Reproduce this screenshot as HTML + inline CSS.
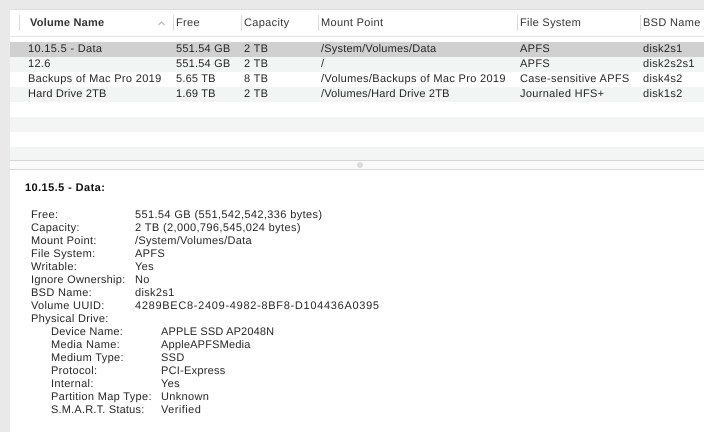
<!DOCTYPE html>
<html><head><meta charset="utf-8"><style>
html,body{margin:0;padding:0;width:704px;height:432px;overflow:hidden;background:#fff}
body{position:relative;font:11px/13px "Liberation Sans",sans-serif;letter-spacing:.33px;color:#262626;-webkit-font-smoothing:antialiased;text-rendering:geometricPrecision}
.r{position:absolute;left:10px;right:0;height:15px}
.t{position:absolute;white-space:nowrap}
.b{position:absolute;background:#dcdcdc;width:1px;top:15px;height:16px}
.h{top:17px;color:#333}
.n{letter-spacing:.2px}
</style></head><body>
<div style="position:absolute;left:0;top:0;width:704px;height:9px;background:#e9e9e9"></div>
<div style="position:absolute;left:0;top:0;width:10px;height:432px;background:#e9e9e9"></div>
<div style="position:absolute;left:10px;right:0;top:9px;height:1px;background:#dedede"></div>
<div style="position:absolute;left:10px;right:0;top:36px;height:1px;background:#e4e4e4"></div>
<div class="b" style="left:19px"></div><div class="b" style="left:173px"></div><div class="b" style="left:241px"></div><div class="b" style="left:318px"></div><div class="b" style="left:517px"></div><div class="b" style="left:640px"></div>
<div class="t h" style="left:30px;font-weight:bold;letter-spacing:.22px">Volume Name</div>
<svg style="position:absolute;left:157px;top:20px" width="10" height="7"><path d="M1.5 5L4.5 2L7.5 5" fill="none" stroke="#b0b0b0" stroke-width="1.1"/></svg>
<div class="t h" style="left:176px">Free</div><div class="t h" style="left:244px">Capacity</div><div class="t h" style="left:321px">Mount Point</div><div class="t h" style="left:520px">File System</div><div class="t h" style="left:643px">BSD Name</div>

<div class="r" style="top:42px;background:#d0d0d0"></div>
<div class="r" style="top:57px;background:#f3f5f4"></div>
<div class="r" style="top:87px;background:#f3f5f4"></div>
<div class="r" style="top:117px;background:#f3f5f4"></div>
<div class="r" style="top:147px;height:13px;background:#f3f5f4"></div>

<div class="t" style="left:28px;top:43px">10.15.5 - Data</div><div class="t n" style="left:176px;top:43px">551.54 GB</div><div class="t" style="left:244px;top:43px">2 TB</div><div class="t n" style="left:321px;top:43px">/System/Volumes/Data</div><div class="t" style="left:520px;top:43px">APFS</div><div class="t" style="left:643px;top:43px">disk2s1</div>
<div class="t" style="left:28px;top:58px">12.6</div><div class="t n" style="left:176px;top:58px">551.54 GB</div><div class="t" style="left:244px;top:58px">2 TB</div><div class="t" style="left:321px;top:58px">/</div><div class="t" style="left:520px;top:58px">APFS</div><div class="t" style="left:643px;top:58px">disk2s2s1</div>
<div class="t" style="left:28px;top:73px">Backups of Mac Pro 2019</div><div class="t n" style="left:176px;top:73px">5.65 TB</div><div class="t" style="left:244px;top:73px">8 TB</div><div class="t" style="left:321px;top:73px">/Volumes/Backups of Mac Pro 2019</div><div class="t" style="left:520px;top:73px">Case-sensitive APFS</div><div class="t" style="left:643px;top:73px">disk4s2</div>
<div class="t n" style="left:28px;top:88px">Hard Drive 2TB</div><div class="t n" style="left:176px;top:88px">1.69 TB</div><div class="t" style="left:244px;top:88px">2 TB</div><div class="t n" style="left:321px;top:88px">/Volumes/Hard Drive 2TB</div><div class="t" style="left:520px;top:88px">Journaled HFS+</div><div class="t" style="left:643px;top:88px">disk1s2</div>

<div style="position:absolute;left:10px;right:0;top:160px;height:1px;background:#d6d6d6"></div>
<div style="position:absolute;left:10px;right:0;top:161px;height:8px;background:#fafafa"></div>
<div style="position:absolute;left:10px;right:0;top:169px;height:1px;background:#d9d9d9"></div>
<div style="position:absolute;left:357px;top:162px;width:6px;height:6px;border-radius:50%;background:#dcdcdc"></div>

<div class="t" style="left:25px;top:182px;font-weight:bold;color:#111;letter-spacing:.42px">10.15.5 - Data:</div>

<div class="t" style="left:31px;top:209px">Free:</div><div class="t" style="left:135px;top:209px;letter-spacing:.38px">551.54 GB (551,542,542,336 bytes)</div>
<div class="t" style="left:31px;top:222px">Capacity:</div><div class="t" style="left:135px;top:222px;letter-spacing:.38px">2 TB (2,000,796,545,024 bytes)</div>
<div class="t" style="left:31px;top:235px">Mount Point:</div><div class="t n" style="left:135px;top:235px;letter-spacing:.28px">/System/Volumes/Data</div>
<div class="t" style="left:31px;top:248px">File System:</div><div class="t" style="left:135px;top:248px">APFS</div>
<div class="t" style="left:31px;top:261px">Writable:</div><div class="t" style="left:135px;top:261px">Yes</div>
<div class="t n" style="left:31px;top:274px;letter-spacing:.27px">Ignore Ownership:</div><div class="t" style="left:135px;top:274px">No</div>
<div class="t" style="left:31px;top:287px">BSD Name:</div><div class="t" style="left:135px;top:287px">disk2s1</div>
<div class="t" style="left:31px;top:300px">Volume UUID:</div><div class="t" style="left:135px;top:300px;letter-spacing:.7px">4289BEC8-2409-4982-8BF8-D104436A0395</div>
<div class="t" style="left:31px;top:313px">Physical Drive:</div>
<div class="t n" style="left:51px;top:326px;letter-spacing:.25px">Device Name:</div><div class="t" style="left:161px;top:326px;letter-spacing:.15px">APPLE SSD AP2048N</div>
<div class="t" style="left:51px;top:339px">Media Name:</div><div class="t n" style="left:161px;top:339px">AppleAPFSMedia</div>
<div class="t" style="left:51px;top:352px">Medium Type:</div><div class="t" style="left:161px;top:352px">SSD</div>
<div class="t" style="left:51px;top:365px">Protocol:</div><div class="t n" style="left:161px;top:365px;letter-spacing:.25px">PCI-Express</div>
<div class="t" style="left:51px;top:378px">Internal:</div><div class="t" style="left:161px;top:378px">Yes</div>
<div class="t" style="left:51px;top:391px">Partition Map Type:</div><div class="t" style="left:161px;top:391px">Unknown</div>
<div class="t n" style="left:51px;top:404px">S.M.A.R.T. Status:</div><div class="t" style="left:161px;top:404px;letter-spacing:.45px">Verified</div>
</body></html>
